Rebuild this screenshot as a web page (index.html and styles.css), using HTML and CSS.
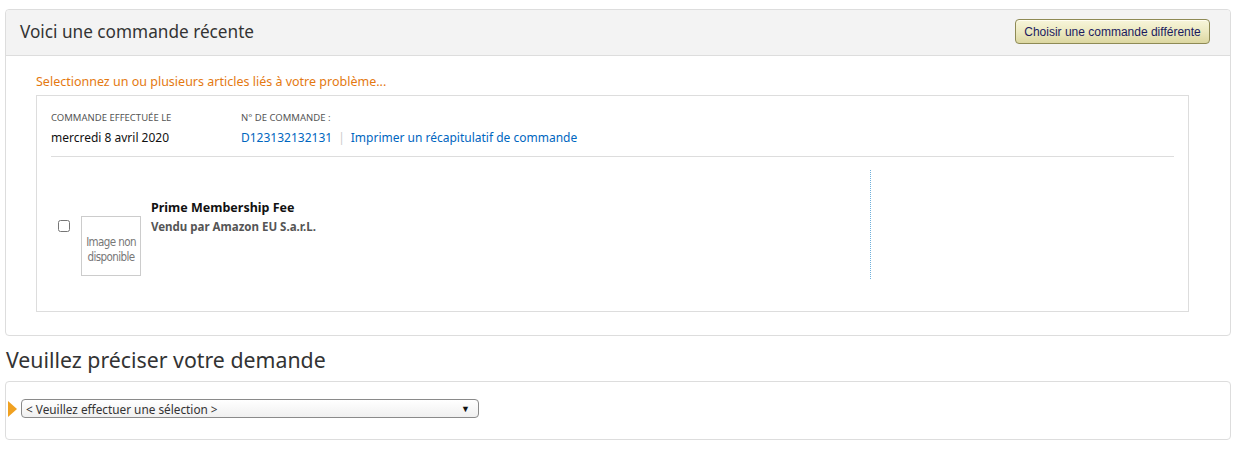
FILE: index.html
```html
<!DOCTYPE html>
<html lang="fr">
<head>
<meta charset="utf-8">
<title>Commande récente</title>
<link rel="stylesheet" href="styles.css">
</head>
<body>
<div class="page">
  <section class="card">
    <div class="card-head">
      <h2 class="card-title">Voici une commande récente</h2>
      <button class="btn-choose" type="button">Choisir une commande différente</button>
    </div>
    <div class="card-body">
      <p class="hint">Selectionnez un ou plusieurs articles liés à votre problème...</p>
      <div class="order">
        <div class="order-meta">
          <div class="meta-col meta-date">
            <div class="meta-label">Commande effectuée le</div>
            <div class="meta-value">mercredi 8 avril 2020</div>
          </div>
          <div class="meta-col">
            <div class="meta-label">N° de commande :</div>
            <div class="meta-value"><a class="link" href="#">D123132132131</a><span class="sep">|</span><a class="link" href="#">Imprimer un récapitulatif de commande</a></div>
          </div>
        </div>
        <div class="order-items">
          <div class="item-col">
            <label class="item">
              <input class="item-check" type="checkbox">
              <div class="noimg">Image non<br>disponible</div>
              <div class="item-info">
                <div class="item-title">Prime Membership Fee</div>
                <div class="item-seller">Vendu par Amazon EU S.a.r.L.</div>
              </div>
            </label>
          </div>
          <div class="item-side"></div>
        </div>
      </div>
    </div>
  </section>

  <h2 class="section-title">Veuillez préciser votre demande</h2>
  <section class="card request">
    <div class="request-row">
      <span class="arrow"></span>
      <div class="select">
        <span>&lt; Veuillez effectuer une sélection &gt;</span>
        <span class="caret">▼</span>
      </div>
    </div>
  </section>
</div>
</body>
</html>
```

FILE: styles.css
```css
* { box-sizing: border-box; }
html, body { margin: 0; padding: 0; background: #fff; }
body {
  font-family: "Noto Sans", "Open Sans", Arial, sans-serif;
  color: #111;
}
.page {
  padding: 9px 9px 0 5px;
}
.card {
  border: 1px solid #ddd;
  border-radius: 4px;
  background: #fff;
}
.card-head {
  height: 46px;
  background: #f3f3f3;
  border-bottom: 1px solid #ddd;
  border-radius: 4px 4px 0 0;
  display: flex;
  align-items: center;
  justify-content: space-between;
  padding: 0 20px 0 14px;
}
.card-title {
  margin: 0;
  font-weight: 400;
  font-size: 17.2px;
  color: #333;
  position: relative;
  top: -1px;
}
.btn-choose {
  font-family: Arial, "Liberation Sans", sans-serif;
  font-size: 12px;
  color: #1b1a5e;
  height: 25px;
  width: 195px;
  padding: 0;
  border: 1px solid #8e8a55;
  border-radius: 4px;
  background: linear-gradient(#f7f5da, #ece9c1 50%, #dcd7a1);
  box-shadow: inset 0 1px 0 #fffdf0;
  position: relative;
  top: -1px;
}
.card-body {
  padding: 18px 41px 23px 30px;
}
.hint {
  margin: 0 0 5px;
  font-size: 12.5px;
  line-height: 16px;
  color: #e47911;
}
.order {
  border: 1px solid #ddd;
  padding: 0 14px;
  height: 217px;
}
.order-meta {
  display: flex;
  padding: 15px 0 9px;
  border-bottom: 1px solid #ddd;
}
.meta-col { display: flex; flex-direction: column; }
.meta-date { width: 190px; }
.meta-label {
  font-size: 9.5px;
  text-transform: uppercase;
  color: #555;
  line-height: 13px;
}
.meta-value {
  font-size: 12px;
  line-height: 18px;
  margin-top: 5px;
  color: #111;
}
.link { color: #0066c0; text-decoration: none; }
.sep { color: #ccc; margin: 0 6px; }
.order-items {
  display: flex;
  padding-top: 13px;
}
.item-col {
  width: 820px;
  height: 109px;
  border-right: 1px dotted #6fb0dc;
}
.item {
  display: flex;
  align-items: flex-start;
  padding: 30px 0 0 7px;
}
.item-check {
  margin: 20px 10px 0 0;
  width: 12px;
  height: 12px;
  accent-color: #888;
}
.noimg {
  width: 60px;
  height: 60px;
  border: 1px solid #ccc;
  margin: 16px 0 0 1px;
  display: flex;
  align-items: center;
  justify-content: center;
  text-align: center;
  font-family: "DejaVu Sans Condensed", "DejaVu Sans", sans-serif;
  font-stretch: condensed;
  font-size: 11.5px;
  line-height: 15px;
  letter-spacing: -0.6px;
  color: #777;
  padding-top: 8px;
}
.item-info { margin-left: 10px; }
.item-title {
  font-weight: 700;
  font-size: 12.5px;
  line-height: 16px;
  color: #111;
}
.item-seller {
  font-weight: 700;
  font-size: 11.5px;
  line-height: 16px;
  color: #555;
  margin-top: 3px;
}
.section-title {
  margin: 10px 0 7px 1px;
  font-weight: 400;
  font-size: 21.3px;
  line-height: 28px;
  color: #333;
}
.request { height: 59px; }
.request-row {
  display: flex;
  align-items: center;
  padding: 17px 0 0 2px;
}
.arrow {
  width: 0;
  height: 0;
  border-top: 8px solid transparent;
  border-bottom: 8px solid transparent;
  border-left: 9px solid #f0a121;
  margin-right: 4px;
}
.select {
  width: 458px;
  height: 19px;
  border: 1px solid #8a8a8a;
  border-radius: 4px;
  background: linear-gradient(#fff, #f0f0f0);
  display: flex;
  align-items: center;
  justify-content: space-between;
  padding: 0 8px 0 4px;
  font-size: 11.8px;
  color: #333;
}
.caret { font-size: 9px; color: #111; }
```
